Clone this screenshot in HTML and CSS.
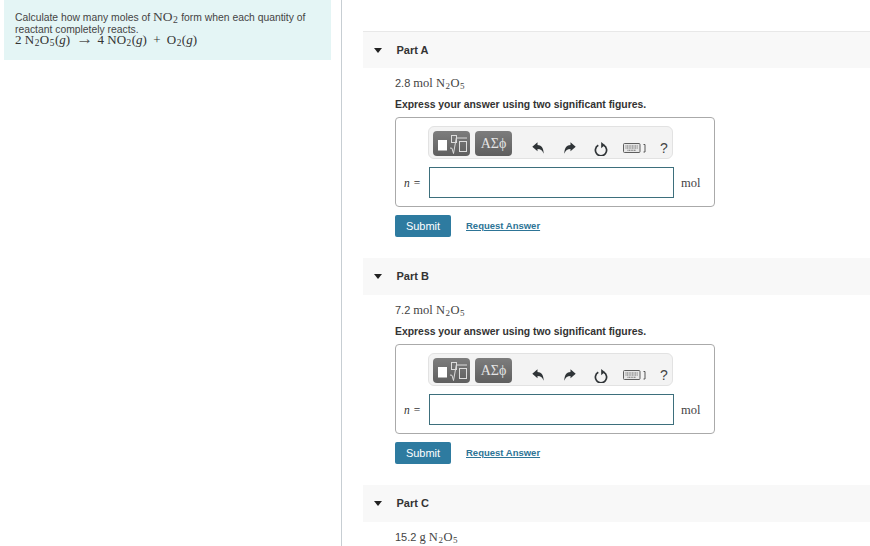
FILE: index.html
```html
<!DOCTYPE html>
<html lang="en">
<head>
<meta charset="utf-8">
<title>Moles of NO2</title>
<link rel="stylesheet" href="styles.css">
</head>
<body>
<svg class="defs" width="0" height="0" aria-hidden="true">
  <symbol id="undo" viewBox="0 0 12 12"><path d="M0.300 4.700 5.500 0.300v2.800c3.700 0.100 6 2.500 6.200 8.600C10.300 8.300 8.600 6.900 5.500 6.900v2.400z" fill="#2f3437"/></symbol>
  <symbol id="redo" viewBox="0 0 12 12"><path d="M11.700 4.700 6.500 0.300v2.800c-3.700 0.100-6 2.500-6.200 8.600C1.700 8.300 3.400 6.900 6.500 6.900v2.400z" fill="#2f3437"/></symbol>
  <symbol id="reset" viewBox="0 0 14 14"><path d="M4.300 3.300a5.600 5.600 0 1 0 5.400 0" fill="none" stroke="#2f3437" stroke-width="1.700"/><path d="M7.200 0v6.200L10.800 3z" fill="#2f3437"/></symbol>
  <symbol id="keys" viewBox="0 0 24 10"><rect x="0.500" y="0.500" width="16.500" height="9" rx="1" fill="#e6e6e6" stroke="#5e5e5e"/><path d="M2.500 3h12.500M2.500 5h12.500M4.500 7.300h8.500" stroke="#666" stroke-width="1.100" stroke-dasharray="1 .6"/><path d="M20.500 1.500h1.500v7.500h-1.500" fill="none" stroke="#555" stroke-width="1"/></symbol>
  <symbol id="templates" viewBox="0 0 37 25"><rect x="5" y="9" width="9" height="10.500" fill="#fff"/><rect x="18.500" y="4.500" width="5" height="7" fill="none" stroke="#ddd"/><path d="M17 17l2 0.300 1.500 5.200 2.800-15.500h10.700" fill="none" stroke="#ddd"/><rect x="26.500" y="10.500" width="7" height="10" fill="none" stroke="#ddd"/></symbol>
</svg>
<div class="page">
  <aside class="side">
    <div class="intro">
      <p class="intro-text">Calculate how many moles of <span class="m m-big">NO<sub>2</sub></span> form when each quantity of reactant completely reacts.</p>
      <p class="equation">2 N<sub>2</sub>O<sub>5</sub>(<i>g</i>) <span class="arrow">→</span> 4 NO<sub>2</sub>(<i>g</i>) <span class="plus">+</span> O<sub>2</sub>(<i>g</i>)</p>
    </div>
  </aside>
  <main class="parts">
    <section class="part">
      <header class="part-head"><span class="caret"></span><h2>Part A</h2></header>
      <div class="part-body">
        <p class="qty">2.8 <span class="m">mol N<sub>2</sub>O<sub>5</sub></span></p>
        <p class="hint">Express your answer using two significant figures.</p>
        <div class="answer">
          <div class="toolbar">
            <button class="tool tool-t" aria-label="Templates"><svg width="37" height="25"><use href="#templates"/></svg></button>
            <button class="tool tool-s">ΑΣϕ</button>
            <svg class="ic ic-undo" width="12" height="12"><use href="#undo"/></svg>
            <svg class="ic ic-redo" width="12" height="12"><use href="#redo"/></svg>
            <svg class="ic ic-reset" width="14" height="14"><use href="#reset"/></svg>
            <svg class="ic ic-keys" width="24" height="10"><use href="#keys"/></svg>
            <span class="help">?</span>
          </div>
          <div class="entry"><span class="var"><i>n</i> =</span><div class="field"></div><span class="unit">mol</span></div>
        </div>
        <div class="actions"><button class="submit">Submit</button><a class="request" href="#">Request Answer</a></div>
      </div>
    </section>
    <section class="part">
      <header class="part-head"><span class="caret"></span><h2>Part B</h2></header>
      <div class="part-body">
        <p class="qty">7.2 <span class="m">mol N<sub>2</sub>O<sub>5</sub></span></p>
        <p class="hint">Express your answer using two significant figures.</p>
        <div class="answer">
          <div class="toolbar">
            <button class="tool tool-t" aria-label="Templates"><svg width="37" height="25"><use href="#templates"/></svg></button>
            <button class="tool tool-s">ΑΣϕ</button>
            <svg class="ic ic-undo" width="12" height="12"><use href="#undo"/></svg>
            <svg class="ic ic-redo" width="12" height="12"><use href="#redo"/></svg>
            <svg class="ic ic-reset" width="14" height="14"><use href="#reset"/></svg>
            <svg class="ic ic-keys" width="24" height="10"><use href="#keys"/></svg>
            <span class="help">?</span>
          </div>
          <div class="entry"><span class="var"><i>n</i> =</span><div class="field"></div><span class="unit">mol</span></div>
        </div>
        <div class="actions"><button class="submit">Submit</button><a class="request" href="#">Request Answer</a></div>
      </div>
    </section>
    <section class="part part-last">
      <header class="part-head"><span class="caret"></span><h2>Part C</h2></header>
      <div class="part-body">
        <p class="qty">15.2 <span class="m">g N<sub>2</sub>O<sub>5</sub></span></p>
      </div>
    </section>
  </main>
</div>
</body>
</html>
```
FILE: styles.css
```css
* { box-sizing: border-box; }
html, body { margin: 0; height: 546px; overflow: hidden; background: #fff; }
body { font-family: "Liberation Sans", Arial, sans-serif; color: #333; font-size: 11px; }
.defs { position: absolute; }
p, h2 { margin: 0; }
.page { display: flex; height: 546px; }
.side { width: 342px; flex: none; padding-left: 4px; border-right: 1px solid #c7ced3; }
.intro { width: 327px; height: 60px; background: #e4f5f5; padding: 11px 11px 0; }
.intro-text { font-size: 10.350px; line-height: 12px; color: #444; }
.m { font-family: "Liberation Serif", serif; }
.m-big { font-size: 13.500px; }
.m sub, .equation sub { font-size: 0.72em; line-height: 0; vertical-align: -0.25em; margin: 0 0.5px; }
.equation { font-family: "Liberation Serif", serif; font-size: 13px; line-height: 12px; margin-top: -2px; color: #333; }
.arrow { font-size: 17px; line-height: 0; margin: 0 1px 0 3px; color: #555; }
.plus { margin: 0 3px; }
.parts { flex: 1; padding: 31px 0 0 21px; min-width: 0; }
.part { height: 227px; }
.part-last { height: auto; }
.part-head { height: 37px; background: #f8f8f8; display: flex; align-items: center; }
.part:first-child .part-head { border-top: 1px solid #e8e8e8; }
.caret { width: 0; height: 0; border-left: 4.500px solid transparent; border-right: 4.500px solid transparent; border-top: 5px solid #222; margin-left: 11px; }
.part-head h2 { font-size: 11px; font-weight: bold; color: #333; margin-left: 14.500px; margin-top: -1px; }
.part-body { padding: 8px 0 0 32px; }
.qty { font-size: 11px; line-height: 14px; height: 14px; color: #444; }
.qty .m { font-size: 12.500px; }
.hint { font-size: 10.400px; font-weight: bold; color: #333; line-height: 13px; margin-top: 8px; }
.answer { width: 320px; height: 90px; margin-top: 6px; border: 1px solid #aaa; border-radius: 4px; padding: 8px 0 0 32px; }
.toolbar { display: flex; align-items: flex-start; width: 245px; height: 33px; background: #f3f3f3; border: 1px solid #e2e2e2; border-radius: 6px; padding-left: 4px; }
.tool { height: 25px; border: 0; border-radius: 4px; background: linear-gradient(#7d7d7d, #5f5f5f); color: #e4e4e4; padding: 0; display: flex; align-items: center; justify-content: center; margin-top: 4px; }
.tool-t { width: 37px; }
.tool-s { width: 37px; margin-left: 5px; font-family: "Liberation Serif", serif; font-size: 14px; }
.ic { flex: none; margin-top: 15px; }
.ic-undo { margin-left: 20px; }
.ic-redo { margin-left: 20px; }
.ic-reset { margin-left: 18px; }
.ic-keys { margin-left: 15px; margin-top: 16px; }
.help { font-size: 14px; line-height: 16px; color: #444; margin-left: 13px; margin-top: 13px; }
.entry { display: flex; align-items: center; margin-top: 8px; }
.var { font-family: "Liberation Serif", serif; font-size: 11.500px; letter-spacing: 0.500px; width: 25px; margin-left: -24px; color: #333; }
.field { width: 245px; height: 31px; background: #fff; border: 1px solid #3d6f7c; }
.unit { font-family: "Liberation Serif", serif; font-size: 12.500px; margin: 1px 0 0 7px; color: #444; }
.actions { display: flex; align-items: center; margin-top: 8px; }
.submit { width: 56px; height: 22px; border: 0; border-radius: 2px; background: #2e7ba0; color: #fff; font: 11px "Liberation Sans", Arial, sans-serif; padding: 0; }
.request { margin-left: 15px; margin-top: -1px; color: #2d7496; font-size: 9.500px; font-weight: bold; text-decoration: underline; }
```
